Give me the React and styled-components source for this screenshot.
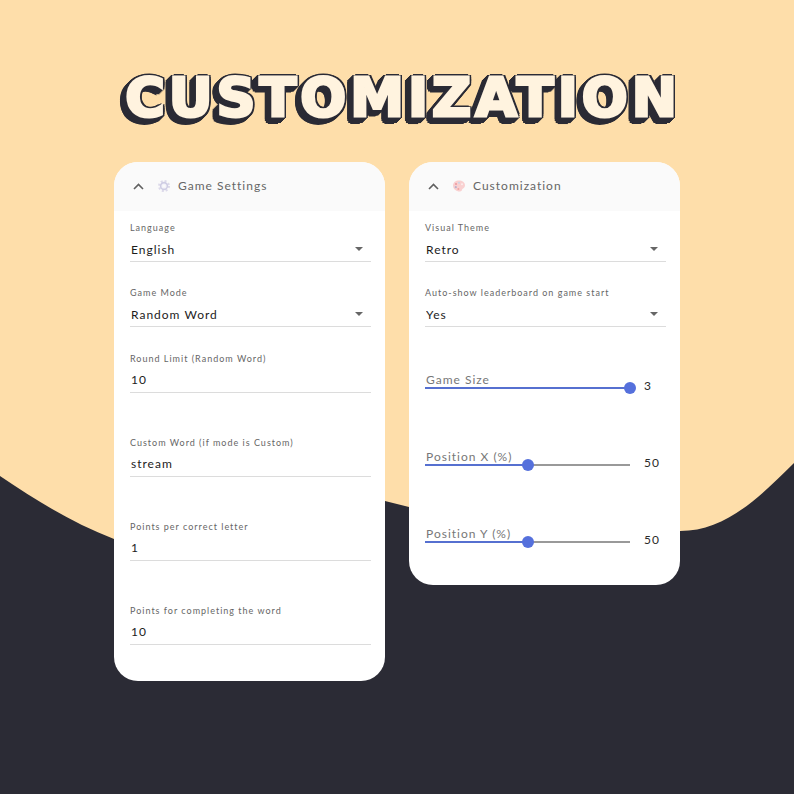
import React, { useState } from "react";
import styled, { createGlobalStyle } from "styled-components";

const ink = "#2b2b35";
const sand = "#fedeaa";
const cream = "#fff3df";
const uiFont = `Lato, Roboto, "Liberation Sans", sans-serif`;

const GlobalStyle = createGlobalStyle`
  *, *::before, *::after { box-sizing: border-box; }
  body { margin: 0; background: ${ink}; }
`;

const Page = styled.main`
  position: relative;
  isolation: isolate;
  min-height: 100vh;
  padding: 62px 24px 112px;
  background: ${ink};
  font-family: ${uiFont};
  letter-spacing: 1px;
  color: #2a2a2a;
`;

const Backdrop = styled.svg`
  position: absolute;
  inset: 0;
  z-index: -1;
  width: 100%;
  height: 100%;
`;

/* A ring of hard shadows outlines each letter; the same ring is then
   swept down and to the left to form the solid extrusion. */
const ring = [[3, 0], [-3, 0], [0, 3], [0, -3], [2, 2], [-2, 2], [2, -2], [-2, -2], [3, 2], [3, -2], [-3, -2]];
const extrusion = [0, 1, 2, 3, 4, 5]
  .flatMap((d) => ring.map(([x, y]) => `${x - d}px ${y + d}px ${ink}`))
  .join(", ");

const Title = styled.h1`
  margin: 0 0 28px;
  padding-left: 12px;
  text-align: center;
  font: 700 54px/72px "DejaVu Sans", sans-serif;
  letter-spacing: 4px;
  text-transform: uppercase;
  color: ${cream};
  -webkit-text-stroke: 3px ${cream};
  text-shadow: ${extrusion};
`;

const Columns = styled.div`
  display: grid;
  grid-template-columns: repeat(auto-fit, minmax(240px, 1fr));
  align-items: start;
  gap: 24px;
  max-width: 566px;
  margin: 0 auto;
`;

const Card = styled.section`
  overflow: hidden;
  border-radius: 24px;
  background: #fff;
`;

const CardHeader = styled.button`
  display: flex;
  align-items: center;
  width: 100%;
  height: 49px;
  padding: 0 18px 2px;
  border: 0;
  background: #fafafa;
  color: #666;
  font: 400 12px/16px ${uiFont};
  letter-spacing: 1px;
  text-align: left;
  cursor: pointer;
`;

const HeaderIcon = styled.svg`
  width: 14px;
  height: 14px;
  margin-right: ${(p) => p.$gap}px;
`;

const CardBody = styled.div`
  display: flex;
  flex-direction: column;
  padding: 11px 14px 36px 16px;
`;

const Field = styled.div`
  display: flex;
  flex-direction: column;
  margin-bottom: ${(p) => p.$after || 0}px;
`;

const FieldLabel = styled.label`
  font-size: 9px;
  line-height: 12px;
  color: #666;
`;

const controlText = `
  width: 100%;
  height: 28px;
  border: 0;
  border-bottom: 1px solid #dcdcdc;
  border-radius: 0;
  outline: none;
  appearance: none;
  background: transparent;
  color: #1c1c1c;
  font: 400 12px/24px ${uiFont};
  letter-spacing: 1px;
`;

const TextInput = styled.input`
  ${controlText}
  padding: 1px 1px 0;
`;

const SelectWrap = styled.div`
  display: grid;
  align-items: center;
`;

const Select = styled.select`
  ${controlText}
  grid-area: 1 / 1;
  padding: 4px 1px 0;
`;

const Caret = styled.svg`
  grid-area: 1 / 1;
  justify-self: end;
  width: 8px;
  height: 4px;
  margin: 2px 8px 0 0;
  pointer-events: none;
`;

const Sliders = styled.div`
  display: flex;
  flex-direction: column;
  gap: 55px;
`;

const SliderRow = styled.div`
  display: grid;
  grid-template-columns: 1fr 22px;
  column-gap: 14px;
`;

const SliderStack = styled.div`
  display: flex;
  flex-direction: column;
`;

const SliderLabel = styled.label`
  padding-left: 1px;
  font-size: 12px;
  line-height: 14px;
  color: #777;
`;

const Range = styled.input`
  appearance: none;
  height: 14px;
  margin: -6px -6px 0;
  background:
    linear-gradient(to right, #5670d0 ${(p) => p.$fill}%, #999 ${(p) => p.$fill}%)
    center / calc(100% - 12px) 2px no-repeat;
  cursor: pointer;

  &::-webkit-slider-thumb {
    appearance: none;
    width: 12px;
    height: 12px;
    border-radius: 50%;
    background: #5570dc;
  }
`;

const SliderValue = styled.output`
  align-self: end;
  font-size: 12px;
  line-height: 18px;
`;

function Chevron() {
  return (
    <HeaderIcon viewBox="0 0 14 14" $gap={11} aria-hidden="true">
      <path d="M2 10 6.500 5.500 11 10" fill="none" stroke="#606060" strokeWidth="1.600" />
    </HeaderIcon>
  );
}

function Gear() {
  return (
    <HeaderIcon viewBox="0 0 14 14" $gap={7} aria-hidden="true">
      <circle cx="7" cy="7" r="5" fill="none" stroke="#dcd9ea" strokeWidth="2" strokeDasharray="2 1.927" />
      <circle cx="7" cy="7" r="3.400" fill="#f3f2f9" stroke="#cfcde4" strokeWidth="1.600" />
      <circle cx="7" cy="7" r="1.300" fill="#fafafa" />
    </HeaderIcon>
  );
}

function Palette() {
  return (
    <HeaderIcon viewBox="0 0 14 14" $gap={7} aria-hidden="true">
      <path
        d="M1 6.500C1 3.400 3.800 1.500 7 1.500s6 2 6 4.700c0 2-1.200 2.800-2.300 3.500-.9.600-.6 1.300-1.100 2.100-.6.900-2 .9-3.200.6C3.600 11.700 1 9.800 1 6.500Z"
        fill="#f9d0d0"
      />
      <circle cx="4" cy="5" r="1.100" fill="#ee9aa2" />
      <circle cx="7" cy="3.700" r="1" fill="#c9d6e8" />
      <circle cx="10" cy="5.200" r="1" fill="#fbeeee" />
      <circle cx="3.800" cy="8.200" r="1.100" fill="#b9b0cc" />
      <circle cx="6.400" cy="10" r="1" fill="#f0a3a3" />
    </HeaderIcon>
  );
}

function SelectField({ id, label, options, after }) {
  return (
    <Field $after={after}>
      <FieldLabel htmlFor={id}>{label}</FieldLabel>
      <SelectWrap>
        <Select id={id}>
          {options.map((o) => <option key={o}>{o}</option>)}
        </Select>
        <Caret viewBox="0 0 8 4" aria-hidden="true">
          <path d="M0 0h8L4 4Z" fill="#666" />
        </Caret>
      </SelectWrap>
    </Field>
  );
}

function TextField({ id, label, value, after }) {
  return (
    <Field $after={after}>
      <FieldLabel htmlFor={id}>{label}</FieldLabel>
      <TextInput id={id} defaultValue={value} />
    </Field>
  );
}

function SliderField({ id, label, initial, max }) {
  const [value, setValue] = useState(initial);
  return (
    <SliderRow>
      <SliderStack>
        <SliderLabel htmlFor={id}>{label}</SliderLabel>
        <Range
          id={id}
          type="range"
          min="0"
          max={max}
          value={value}
          $fill={(value / max) * 100}
          onChange={(e) => setValue(Number(e.target.value))}
        />
      </SliderStack>
      <SliderValue htmlFor={id}>{value}</SliderValue>
    </SliderRow>
  );
}

function Panel({ icon, title, children }) {
  const [open, setOpen] = useState(true);
  return (
    <Card>
      <CardHeader type="button" aria-expanded={open} onClick={() => setOpen(!open)}>
        <Chevron />
        {icon}
        {title}
      </CardHeader>
      {open && <CardBody>{children}</CardBody>}
    </Card>
  );
}

export default function App() {
  return (
    <Page>
      <GlobalStyle />
      <Backdrop viewBox="0 0 794 794" preserveAspectRatio="none" aria-hidden="true">
        <path
          d="M0 0H794V463C757 500 724 531 680 531C590 531 500 508 409 507L385 501C300 485 220 555 114 539C75 524 38 502 0 476Z"
          fill={sand}
        />
      </Backdrop>
      <Title>Customization</Title>
      <Columns>
        <Panel icon={<Gear />} title="Game Settings">
          <SelectField id="language" label="Language" options={["English"]} after={25} />
          <SelectField id="mode" label="Game Mode" options={["Random Word"]} after={26} />
          <TextField id="limit" label="Round Limit (Random Word)" value="10" after={44} />
          <TextField id="custom" label="Custom Word (if mode is Custom)" value="stream" after={44} />
          <TextField id="letter" label="Points per correct letter" value="1" after={44} />
          <TextField id="word" label="Points for completing the word" value="10" />
        </Panel>
        <Panel icon={<Palette />} title="Customization">
          <SelectField id="theme" label="Visual Theme" options={["Retro"]} after={25} />
          <SelectField id="leaderboard" label="Auto-show leaderboard on game start" options={["Yes"]} after={46} />
          <Sliders>
            <SliderField id="size" label="Game Size" initial={3} max={3} />
            <SliderField id="pos-x" label="Position X (%)" initial={50} max={100} />
            <SliderField id="pos-y" label="Position Y (%)" initial={50} max={100} />
          </Sliders>
        </Panel>
      </Columns>
    </Page>
  );
}
